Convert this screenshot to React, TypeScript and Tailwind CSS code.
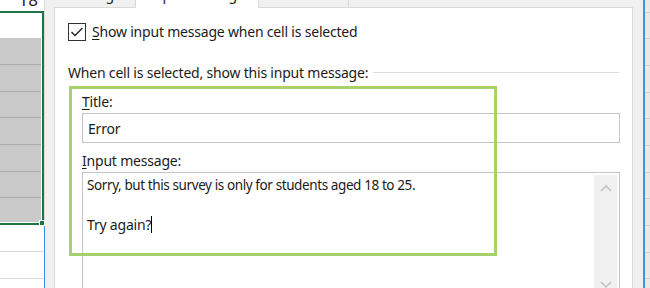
import React from 'react'

const font = { fontFamily: '"Noto Sans", "Open Sans", sans-serif' }

const grayRows = [27, 27, 26, 27, 27, 26]
const sliverRows = [13, 26, 27, 27, 26, 27, 27, 26, 27, 27, 26]

const Chevron: React.FC<{ up?: boolean }> = ({ up }) => (
  <svg width="12" height="8" viewBox="0 0 12 8">
    <polyline
      points={up ? '1,7 6,2 11,7' : '1,1 6,6 11,1'}
      fill="none"
      stroke="#c3c3c3"
      strokeWidth="1.6"
    />
  </svg>
)

const App: React.FC = () => {
  return (
    <div
      className="w-[650px] h-[288px] flex overflow-hidden bg-white text-[14px] tracking-[-0.2px] text-[#1b1b1b]"
      style={font}
    >
      {/* spreadsheet on the left */}
      <div className="w-[44px] flex flex-col relative shrink-0">
        <div className="h-[11px] shrink-0 overflow-hidden flex justify-end pr-[6px]">
          <span className="text-[17px] leading-[17px] mt-[-9px] tracking-normal">18</span>
        </div>
        <div className="shrink-0 border-t-2 border-r-2 border-b-2 border-[#217346] pr-px pb-px">
          <div className="h-[25px]" />
          {grayRows.map((h, i) => (
            <div key={i} className="bg-[#c9c9c9] border-b border-[#a9a9a9]" style={{ height: h }} />
          ))}
          <div className="h-[24px] bg-[#c9c9c9]" />
        </div>
        <div className="h-[27px] shrink-0 border-b border-[#dadada]" />
        <div className="h-[27px] shrink-0 border-b border-[#dadada]" />
        <div className="absolute left-[39px] top-[220px] w-[6px] h-[6px] bg-[#217346] border border-white" />
      </div>
      <div className="w-px flex flex-col shrink-0">
        <div className="h-[225px] shrink-0 bg-[#dadada]" />
        <div className="flex-1 bg-[#3d8fdc]" />
      </div>

      {/* dialog */}
      <div className="flex-1 bg-[#f0f0f0] pl-[9px] pr-[10px] flex flex-col overflow-hidden">
        <div className="h-[8px] shrink-0 flex">
          <div className="w-[81px] border-b border-[#d9d9d9] overflow-hidden flex justify-center">
            <span className="leading-[14px] mt-[-12px]">Settings</span>
          </div>
          <div className="w-[124px] bg-white border-l border-r border-[#d9d9d9] overflow-hidden flex justify-center">
            <span className="leading-[14px] mt-[-12px]">Input Message</span>
          </div>
          <div className="w-[90px] border-r border-b border-[#d9d9d9] overflow-hidden flex justify-center">
            <span className="leading-[14px] mt-[-12px]">Error Alert</span>
          </div>
          <div className="flex-1 border-b border-[#d9d9d9]" />
        </div>

        <div className="flex-1 bg-white border-l border-r border-[#d9d9d9] relative">
          <div className="pt-[14px] pl-[13px] flex items-center">
            <div className="w-[18px] h-[18px] border border-[#333] flex items-center justify-center">
              <svg width="14" height="12" viewBox="0 0 14 12">
                <polyline points="1.5,6 5,9.5 12.5,2" fill="none" stroke="#222" strokeWidth="1.4" />
              </svg>
            </div>
            <span className="ml-[6px] leading-[19px]">
              <u className="underline-offset-2">S</u>how input message when cell is selected
            </span>
          </div>

          <div className="mt-[21px] pl-[13px] pr-[13px] h-[20px] flex items-center">
            <span>When cell is selected, show this input message:</span>
            <div className="flex-1 h-px bg-[#dcdcdc] ml-[5px]" />
          </div>

          <div className="pl-[27px] pr-[12px]">
            <div className="mt-[9px] h-[20px] flex items-center">
              <span>
                <u className="underline-offset-2">T</u>itle:
              </span>
            </div>
            <div className="mt-[2px] h-[30px] border border-[#c4c4c4] flex items-center pl-[5px]">
              Error
            </div>
            <div className="mt-[7px] h-[20px] flex items-center">
              <span>
                <u className="underline-offset-2">I</u>nput message:
              </span>
            </div>
            <div className="mt-[2px] h-[140px] border border-[#c4c4c4] flex">
              <div className="flex-1 pl-[4px] pt-[3px] leading-[19.5px]">
                <div className="text-[13.5px] tracking-[-0.4px]">
                  Sorry, but this survey is only for students aged 18 to 25.
                </div>
                <div>&nbsp;</div>
                <div className="flex items-center">
                  Try again?
                  <span className="inline-block w-px h-[17px] bg-black" />
                </div>
              </div>
              <div className="w-[23px] mt-[2px] mr-[2px] bg-[#f0f0f0] flex flex-col items-center justify-between pt-[9px] pb-[22px]">
                <Chevron up />
                <Chevron />
              </div>
            </div>
          </div>

          {/* highlight frame */}
          <div className="absolute left-[14px] top-[78px] w-[428px] h-[170px] border-[3px] border-[#a6d16b]" />
        </div>
      </div>

      {/* spreadsheet sliver on the right */}
      <div className="w-[2px] bg-[#4a90d9] shrink-0" />
      <div className="w-[5px] flex flex-col bg-[#e8e8e8] shrink-0">
        {sliverRows.map((h, i) => (
          <div key={i} className="border-b border-[#d0d0d0] shrink-0" style={{ height: h }} />
        ))}
      </div>
    </div>
  )
}

export default App
